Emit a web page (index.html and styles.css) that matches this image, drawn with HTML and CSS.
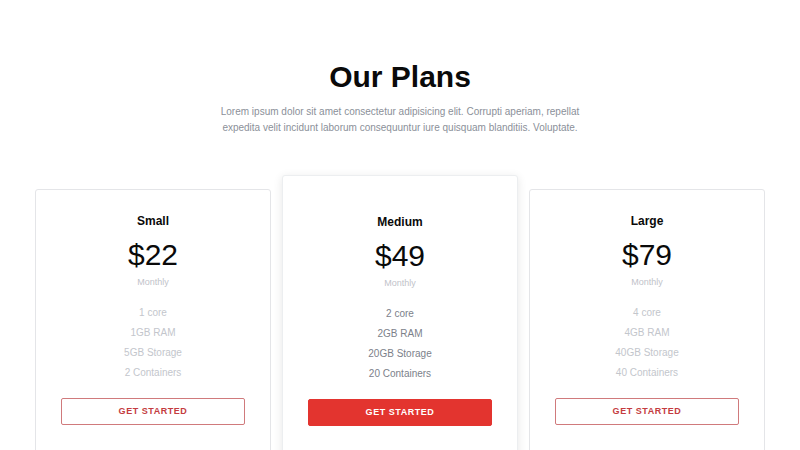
FILE: index.html
```html
<!DOCTYPE html>
<html lang="en">
<head>
<meta charset="utf-8">
<title>Our Plans</title>
<link rel="stylesheet" href="styles.css">
</head>
<body>
<section class="pricing">
  <header class="intro">
    <h1 class="title">Our Plans</h1>
    <p class="lead">Lorem ipsum dolor sit amet consectetur adipisicing elit. Corrupti aperiam, repellat expedita velit incidunt laborum consequuntur iure quisquam blanditiis. Voluptate.</p>
  </header>
  <div class="plans">
    <div class="plan">
      <h2 class="plan-name">Small</h2>
      <div class="price">$22</div>
      <div class="period">Monthly</div>
      <ul class="features">
        <li>1 core</li>
        <li>1GB RAM</li>
        <li>5GB Storage</li>
        <li>2 Containers</li>
      </ul>
      <a class="btn btn-outline" href="#">GET STARTED</a>
    </div>
    <div class="plan plan-featured">
      <h2 class="plan-name">Medium</h2>
      <div class="price">$49</div>
      <div class="period">Monthly</div>
      <ul class="features">
        <li>2 core</li>
        <li>2GB RAM</li>
        <li>20GB Storage</li>
        <li>20 Containers</li>
      </ul>
      <a class="btn btn-solid" href="#">GET STARTED</a>
    </div>
    <div class="plan">
      <h2 class="plan-name">Large</h2>
      <div class="price">$79</div>
      <div class="period">Monthly</div>
      <ul class="features">
        <li>4 core</li>
        <li>4GB RAM</li>
        <li>40GB Storage</li>
        <li>40 Containers</li>
      </ul>
      <a class="btn btn-outline" href="#">GET STARTED</a>
    </div>
  </div>
</section>
</body>
</html>
```

FILE: styles.css
```css
* { box-sizing: border-box; }

html, body {
  margin: 0;
  padding: 0;
  background: #ffffff;
  font-family: "Liberation Sans", Arial, sans-serif;
  color: #111;
  overflow: hidden;
}

.pricing {
  padding: 0 35px;
}

.intro {
  text-align: center;
  padding-top: 59px;
}

.title {
  margin: 0;
  font-size: 30px;
  line-height: 36px;
  font-weight: 700;
  color: #0a0a0a;
}

.lead {
  margin: 9px auto 0;
  max-width: 364px;
  font-size: 10px;
  line-height: 16px;
  color: #8b9099;
}

.plans {
  margin-top: 39px;
  display: grid;
  grid-template-columns: repeat(3, 1fr);
  gap: 11px;
  align-items: start;
}

.plan {
  margin-top: 14px;
  height: 300px;
  background: #fff;
  border: 1px solid #e4e5e8;
  border-radius: 3px;
  padding: 23px 25px 0;
  text-align: center;
}

.plan-featured {
  margin-top: 0;
  height: 320px;
  padding-top: 38px;
  border-color: #eceef0;
  box-shadow: 0 2px 10px rgba(0, 0, 0, 0.10);
}

.plan-name {
  margin: 0;
  font-size: 12px;
  line-height: 16px;
  font-weight: 700;
  color: #0a0a0a;
}

.price {
  margin-top: 8px;
  font-size: 30px;
  line-height: 36px;
  color: #0a0a0a;
}

.period {
  margin-top: 3px;
  font-size: 9px;
  line-height: 12px;
  color: #bfc3ca;
}

.features {
  list-style: none;
  margin: 15px 0 0;
  padding: 0;
  font-size: 10px;
  line-height: 20px;
  color: #c3c6cc;
}

.plan-featured .features {
  color: #7c818a;
}

.btn {
  display: block;
  margin-top: 15px;
  height: 27px;
  line-height: 25px;
  border-radius: 2px;
  font-size: 9px;
  font-weight: 700;
  letter-spacing: 0.06em;
  text-decoration: none;
}

.btn-outline {
  border: 1px solid #d07a7c;
  color: #c43c40;
  background: #fff;
}

.btn-solid {
  border: 1px solid #e3342f;
  background: #e3342f;
  color: #fff;
}
```
